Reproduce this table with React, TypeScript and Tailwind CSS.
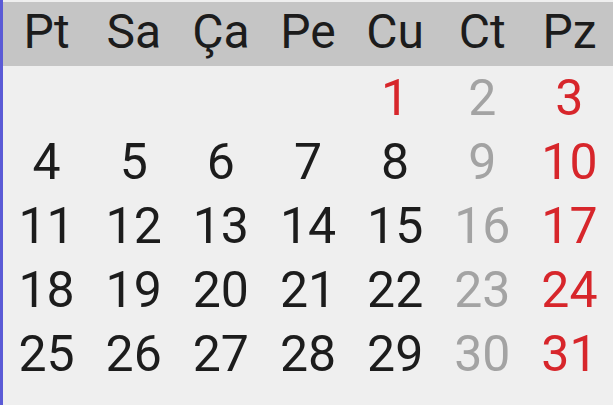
const days = ['Pt', 'Sa', 'Ça', 'Pe', 'Cu', 'Ct', 'Pz'];

// hafta pazartesi ile başlar, ay cuma günü başlıyor
const cells: (number | null)[] = [null, null, null, null, ...Array.from({ length: 31 }, (_, i) => i + 1)];

function colorFor(col: number) {
  if (col === 6) return 'text-[#d7262b]';
  if (col === 5) return 'text-[#a3a3a3]';
  return 'text-[#1c1c1c]';
}

export default function App() {
  return (
    <div className="h-[405px] w-[613px] overflow-hidden border-l-[3px] border-[#5b5bd6] bg-[#efefef] font-['Roboto',sans-serif]">
      <div className="mt-[2px] grid h-[64px] grid-cols-7 items-center bg-[#c5c5c5] pb-[4px] text-[48px] leading-none text-[#1c1c1c]">
        {days.map(d => (
          <div key={d} className="text-center">
            {d}
          </div>
        ))}
      </div>
      <div className="grid grid-cols-7 text-[50px] leading-[64px]">
        {cells.map((n, i) => {
          const col = i % 7;
          const red1 = n === 1;
          return (
            <div key={i} className={`text-center ${red1 ? 'text-[#d7262b]' : colorFor(col)}`}>
              {n ?? '\u00a0'}
            </div>
          );
        })}
      </div>
    </div>
  );
}
